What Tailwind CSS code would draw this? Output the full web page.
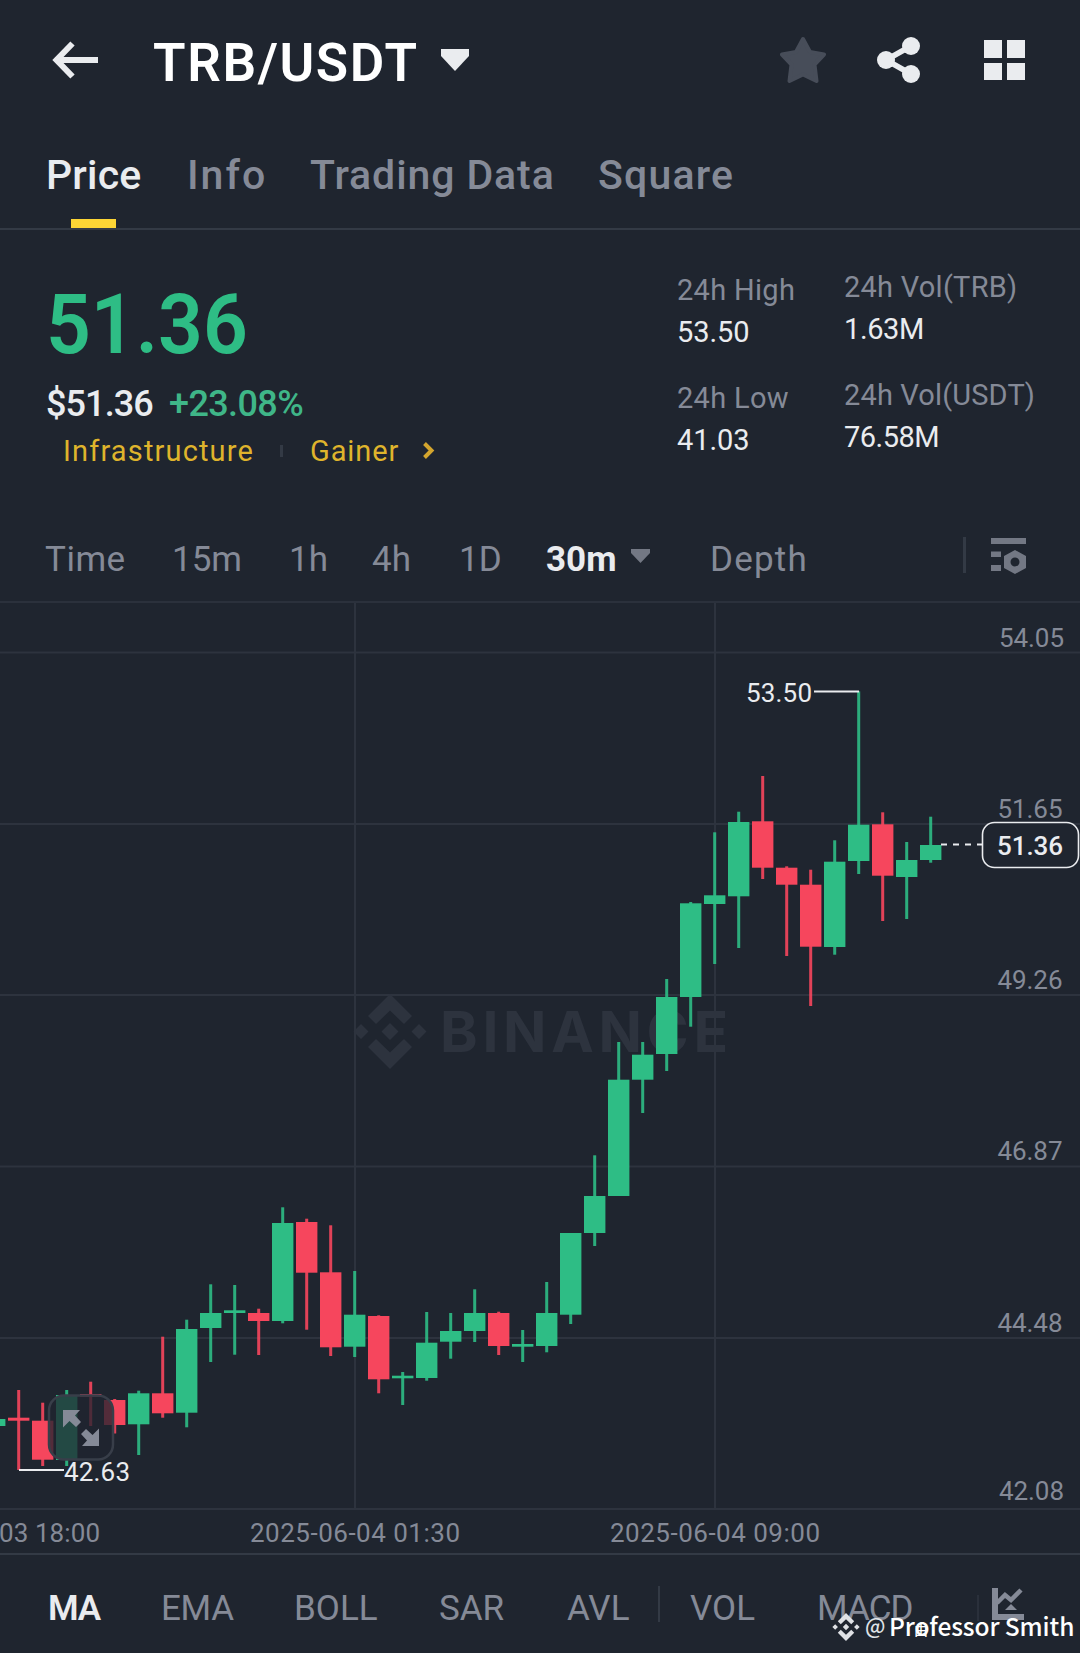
<!DOCTYPE html>
<html lang="en">
<head>
    <meta charset="UTF-8">
    <meta name="viewport" content="width=device-width, initial-scale=1.0">
    <title>TRB/USDT</title>
    <script src="https://cdn.jsdelivr.net/npm/@tailwindcss/browser@4"></script>
</head>
<body class="bg-[#1f252f]">

    <div id="app" class="relative w-[1080px] h-[1653px] overflow-hidden bg-[#1f252f] font-['Roboto',sans-serif] text-[#858a97] whitespace-nowrap">

        <!-- Header -->
        <header class="flex items-center h-[120px] pl-[52px] pr-[55px]">
            <svg class="w-[47px] h-[38px]" viewBox="0 0 47 38" fill="none" stroke="#eaecef" stroke-width="6">
                <path d="M46 19H5M20.500 2.500L4.500 19L20.500 35.500"/>
            </svg>
            <h1 class="ml-[54px] w-[288px] pt-[6px] text-[53px] leading-none font-semibold tracking-[1.600px] text-white">TRB/USDT</h1>
            <svg class="w-[28px] h-[22px]" viewBox="0 0 28 22" fill="#eaecef">
                <path d="M0 0H28V7L14 22L0 7Z"/>
            </svg>
            <div class="ml-auto flex items-center">
                <svg class="w-[46px] h-[48px]" viewBox="0 0 46 48" fill="#474d59" stroke="#474d59" stroke-width="4" stroke-linejoin="round">
                    <path d="M23 3L30 16L44 18.500L34.500 28.500L36.500 45L23 38.500L9.500 45L11.500 28.500L2 18.500L16 16Z"/>
                </svg>
                <svg class="ml-[51px] w-[43px] h-[46px]" viewBox="0 0 43 46" fill="#eaecef" stroke="#eaecef">
                    <path d="M34 9L9 23L34 37" fill="none" stroke-width="5.500"/>
                    <circle cx="34" cy="9" r="9" stroke="none"/>
                    <circle cx="9" cy="23" r="9" stroke="none"/>
                    <circle cx="34" cy="37" r="9" stroke="none"/>
                </svg>
                <div class="ml-[64px] grid grid-cols-2 gap-[5px] w-[41px] h-[40px]">
                    <i class="bg-[#eaecef]"></i><i class="bg-[#eaecef]"></i>
                    <i class="bg-[#eaecef]"></i><i class="bg-[#eaecef]"></i>
                </div>
            </div>
        </header>

        <!-- Tabs -->
        <nav class="grid grid-cols-[141px_123px_288px_auto] h-[110px] pl-[46px] pt-[31px] border-b-2 border-[#333a45] text-[41px] leading-[48px] font-medium">
            <div class="text-[#eaecef]">
                <div class="tracking-[0.200px]">Price</div>
                <div class="ml-[25px] mt-[20px] w-[45px] h-[9px] bg-[#fcd535]"></div>
            </div>
            <div class="tracking-[2px]">Info</div>
            <div class="tracking-[0.900px]">Trading Data</div>
            <div class="tracking-[1.200px]">Square</div>
        </nav>

        <!-- Price summary -->
        <section class="flex h-[284px]">
            <div class="w-[678px] pt-[53px] pl-[46px]">
                <div class="origin-left scale-x-[0.935] text-[84px] leading-[84px] font-semibold text-[#2ebd85]">51.36</div>
                <div class="mt-[17px] flex text-[36px] leading-[40px] font-medium">
                    <span class="w-[123px] tracking-[-0.900px] text-[#eaecef]">$51.36</span>
                    <span class="tracking-[-0.600px] text-[#3fb688]">+23.08%</span>
                </div>
                <div class="mt-[9px] ml-[17px] flex items-center text-[29px] leading-[36px] text-[#dfb42c]">
                    <span class="w-[217px] tracking-[1.150px]">Infrastructure</span>
                    <i class="w-[3px] h-[12px] bg-[#333a45]"></i>
                    <span class="ml-[27px] w-[113px] tracking-[0.900px]">Gainer</span>
                    <svg class="w-[12px] h-[17px] -mt-[1px]" viewBox="0 0 12 17" fill="none" stroke="#d3a52e" stroke-width="4"><path d="M1.500 1.500L8.500 8.500L1.500 15.500"/></svg>
                </div>
            </div>
            <div class="-ml-px w-[167px] pt-[42px] text-[29px] leading-[36px]">
                <div class="tracking-[0.300px]">24h High</div>
                <div class="mt-[6px] tracking-[-0.100px] text-[#eaecef]">53.50</div>
                <div class="mt-[30px] tracking-[0.300px]">24h Low</div>
                <div class="mt-[6px] tracking-[-0.100px] text-[#eaecef]">41.03</div>
            </div>
            <div class="pt-[39px] text-[29px] leading-[36px]">
                <div class="tracking-[0.250px]">24h Vol(TRB)</div>
                <div class="mt-[6px] tracking-[-0.400px] text-[#eaecef]">1.63M</div>
                <div class="mt-[30px] tracking-[0.150px]">24h Vol(USDT)</div>
                <div class="mt-[6px] tracking-[-0.500px] text-[#eaecef]">76.58M</div>
            </div>
        </section>

        <!-- Intervals -->
        <nav class="flex items-center h-[89px] pt-[3px] pl-[45px] pr-[54px] border-b-2 border-[#2b313c] text-[35px] leading-none">
            <span class="w-[127px] tracking-[0.500px]">Time</span>
            <span class="w-[117px]">15m</span>
            <span class="w-[83px]">1h</span>
            <span class="w-[87px]">4h</span>
            <span class="w-[87px]">1D</span>
            <span class="w-[85px] font-bold text-[#eaecef]">30m</span>
            <svg class="-mt-[6px] w-[19px] h-[14px]" viewBox="0 0 19 14" fill="#737884"><path d="M0 0H19V4L9.500 14L0 4Z"/></svg>
            <span class="ml-[60px] tracking-[1.200px]">Depth</span>
            <i class="ml-auto -mt-[8px] w-[3px] h-[36px] bg-[#333a45]"></i>
            <svg class="ml-[25px] -mt-[7px] w-[35px] h-[37px]" viewBox="0 0 35 37" fill="#737884">
                <path d="M0 1H35V7H0ZM0 14.500H10V20H0ZM0 28H10V34H0Z"/>
                <path fill-rule="evenodd" d="M24 13L35 19V31L24 37L13 31V19ZM24 20.500A4.500 4.500 0 1 0 24 29.500A4.500 4.500 0 1 0 24 20.500Z"/>
            </svg>
        </nav>

        <!-- Candlestick chart -->
        <svg id="chart" class="block w-[1080px] h-[950px]" viewBox="0 603 1080 950" font-size="26">
            <g stroke="#2d333e" stroke-width="2">
                <path d="M0 652.500H1080M0 824H1080M0 995H1080M0 1166.500H1080M0 1338H1080M0 1509H1080M355 603V1509M715 603V1509"/>
            </g>
            <g fill="#2d333e">
                <path d="M390 994L412 1016L404 1024L390 1010.500L376 1024L368 1016ZM390 1069L412 1047L404 1039L390 1052.500L376 1039L368 1047ZM390 1023L398.500 1031.500L390 1040L381.500 1031.500ZM361 1024L368.500 1031.500L361 1039L353.500 1031.500ZM419 1024L426.500 1031.500L419 1039L411.500 1031.500Z"/>
                <text x="440" y="1052" font-family="Inter" font-size="57" font-weight="700" textLength="288">BINANCE</text>
            </g>
            <g id="candles"></g>
            <path d="M814 691.500H859M19 1470H64" stroke="#eaecef" stroke-width="2"/>
            <path d="M941 844.500H982" stroke="#eaecef" stroke-width="2" stroke-dasharray="6 6"/>
            <rect x="982.500" y="822.500" width="96" height="45" rx="12" fill="#1f252f" stroke="#eaecef" stroke-width="1.600"/>
            <g fill="#eaecef">
                <text x="746" y="702" textLength="66">53.50</text>
                <text x="997" y="855" textLength="66" font-weight="500">51.36</text>
            </g>
            <g fill="#858a97">
                <text x="999" y="647" textLength="65">54.05</text>
                <text x="997.500" y="818" textLength="65">51.65</text>
                <text x="997.500" y="989" textLength="65">49.26</text>
                <text x="997.500" y="1160" textLength="65">46.87</text>
                <text x="997.500" y="1332" textLength="65">44.48</text>
                <text x="999" y="1500" textLength="65">42.08</text>
                <text x="-1" y="1542" textLength="101">03 18:00</text>
                <text x="250" y="1542" textLength="210">2025-06-04 01:30</text>
                <text x="610" y="1542" textLength="210">2025-06-04 09:00</text>
            </g>
            <!-- Fullscreen button -->
            <rect x="49" y="1395.500" width="64" height="64" rx="15" fill="#1f252f" fill-opacity="0.760" stroke="#383e49" stroke-width="2.500"/>
            <path fill="#858a97" d="M63 1410H80L75 1415.500L81 1422L76 1427L69.500 1421L63 1427.500ZM99 1446H82L87 1440.500L81 1434L86 1429L92.500 1435L99 1428.500Z"/>
            <text x="64" y="1481" textLength="66" fill="#eaecef">42.63</text>
        </svg>

        <!-- Indicators -->
        <nav class="flex items-center h-[100px] pt-[8px] pl-[48px] border-t-2 border-[#333a45] text-[35px] leading-none">
            <span class="w-[113px] font-semibold tracking-[-1.200px] text-[#eaecef]">MA</span>
            <span class="w-[133px] tracking-[-0.300px]">EMA</span>
            <span class="w-[145px]">BOLL</span>
            <span class="w-[128px]">SAR</span>
            <span class="w-[91px]">AVL</span>
            <i class="-mt-[8px] w-[2px] h-[36px] bg-[#333a45]"></i>
            <span class="ml-[30px] w-[127px]">VOL</span>
            <span class="w-[160px] tracking-[-0.900px]">MACD</span>
            <i class="w-[2px] h-[26px] bg-[#2a303b]"></i>
            <svg class="ml-[13px] -mt-[7px] w-[33px] h-[33px]" viewBox="0 0 33 33" fill="#858a97">
                <path d="M0 0H6V26H32V32H0Z"/>
                <path d="M5 15L13 7L19 12L29 2" fill="none" stroke="#858a97" stroke-width="4.500"/>
                <path d="M19 16L25 22H13Z"/>
            </svg>
        </nav>

        <!-- Author mark -->
        <div class="absolute left-[832px] top-[1607px] flex items-center font-['Noto_Sans_CJK_SC',sans-serif] text-[24.500px] leading-[37px] font-medium text-white">
            <svg class="mt-[3px] w-[28px] h-[28px]" viewBox="353 994 74 75" fill="#dfe1e5">
                <path d="M390 994L412 1016L404 1024L390 1010.500L376 1024L368 1016ZM390 1069L412 1047L404 1039L390 1052.500L376 1039L368 1047ZM390 1023L398.500 1031.500L390 1040L381.500 1031.500ZM361 1024L368.500 1031.500L361 1039L353.500 1031.500ZM419 1024L426.500 1031.500L419 1039L411.500 1031.500Z"/>
            </svg>
            <span class="ml-[5px] w-[24px] text-[21px] text-[#dfe1e5]">@</span>
            <span class="tracking-[-0.100px]">Professor Smith</span>
            <span class="absolute left-[82px] top-[4px] text-[14px]">由</span>
        </div>
    </div>

    <script>
        // [direction, high, body top, body bottom, low] for each 30m candle
        const candles = [
            ['up', 1419, 1419, 1426, 1426],
            ['down', 1390, 1417.7, 1420.7, 1470],
            ['down', 1402.7, 1420.7, 1459.7, 1466],
            ['up', 1390, 1395, 1460, 1466],
            ['down', 1381.7, 1394, 1397, 1426],
            ['down', 1399, 1400, 1425, 1433.5],
            ['up', 1390.7, 1393.3, 1424.3, 1455],
            ['down', 1336.7, 1393.3, 1413.3, 1417.7],
            ['up', 1319.7, 1329, 1412.7, 1427.3],
            ['up', 1284.3, 1313, 1328, 1362],
            ['up', 1285, 1310.3, 1313, 1354.7],
            ['down', 1308.7, 1313, 1321, 1355],
            ['up', 1207.3, 1223, 1321, 1323.3],
            ['down', 1218.7, 1222, 1272.7, 1329.7],
            ['down', 1225.3, 1272.3, 1347.3, 1356],
            ['up', 1271, 1314.7, 1346.7, 1357],
            ['down', 1315.3, 1316, 1379.3, 1393.3],
            ['up', 1372, 1375.7, 1378.3, 1405],
            ['up', 1312, 1342.7, 1378, 1380.7],
            ['up', 1313, 1331, 1341.7, 1358.7],
            ['up', 1289.3, 1313, 1331, 1342],
            ['down', 1311.7, 1313, 1346, 1355],
            ['up', 1330, 1344, 1346.7, 1362],
            ['up', 1282, 1313, 1346, 1352.3],
            ['up', 1233, 1233, 1314.7, 1324],
            ['up', 1155.3, 1196, 1233, 1246],
            ['up', 1042, 1079.7, 1196, 1196],
            ['up', 1042, 1054.7, 1079.7, 1113],
            ['up', 979, 997, 1054, 1071],
            ['up', 902, 903.3, 997, 1026.7],
            ['up', 832.3, 895.3, 904, 964],
            ['up', 811.7, 822, 896.3, 948],
            ['down', 776, 821.3, 867.7, 879],
            ['down', 866.3, 867.7, 884.7, 956],
            ['down', 869.7, 884.7, 946.7, 1006],
            ['up', 840.3, 861.7, 947, 954.7],
            ['up', 691.3, 824.7, 861, 874],
            ['down', 812.3, 824.3, 875.7, 921],
            ['up', 842, 860, 877, 919],
            ['up', 816.7, 845, 860, 862.7]
        ];

        const colors = { up: '#2ebd85', down: '#f6465d' };

        document.getElementById('candles').innerHTML = candles.map(([dir, high, top, bottom, low], i) => {
            const x = -5.3 + i * 24;
            return `
                <g fill="${colors[dir]}">
                    <rect x="${x - 1.5}" y="${high}" width="3" height="${low - high}" fill-opacity="0.9"/>
                    <rect x="${x - 10.7}" y="${top}" width="21.4" height="${bottom - top}"/>
                </g>`;
        }).join('');
    </script>

</body>
</html>
